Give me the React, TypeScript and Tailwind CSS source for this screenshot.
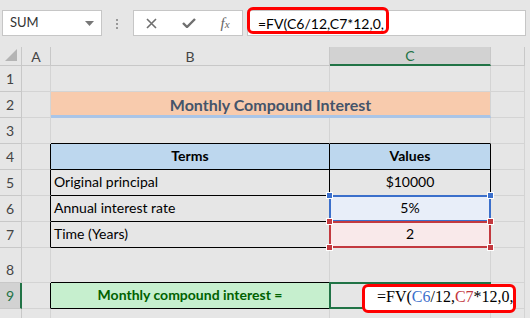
import React from 'react';

const grid = 'border-r border-b border-[#d4d4d4]';
const head = 'bg-[#e6e6e6] border-r border-b border-[#c8c8c8] text-[#444] text-[14px]';

function RowHead({ n, selected }: { n?: number; selected?: boolean }) {
    return (
        <div
            className={
                selected
                    ? 'bg-[#d2d2d2] border-b border-[#c8c8c8] border-r-2 border-r-[#217346] text-[#217346] text-[14px] flex items-end pl-[6px] pb-[2px]'
                    : `${head} flex items-end pl-[6px] pb-[2px]`
            }
        >
            {n}
        </div>
    );
}

export default function App() {
    return (
        <div className="w-[530px] h-[318px] overflow-hidden bg-[#e6e6e6] font-['Lato',sans-serif] text-black">
            {/* Formula bar */}
            <div className="flex items-start h-[47px] pt-[10px]">
                <div className="ml-[2px] w-[100px] h-[26px] bg-white border border-[#c6c6c6] flex items-center justify-between pl-[7px] pr-[7px]">
                    <span className="text-[13px] text-[#333]">SUM</span>
                    <svg width="9" height="5" viewBox="0 0 9 5">
                        <path d="M0 0 L9 0 L4.5 5 Z" fill="#777" />
                    </svg>
                </div>
                <div className="ml-[14px] mt-[9px] flex flex-col gap-[2px]">
                    <div className="w-[2px] h-[2px] bg-[#999]" />
                    <div className="w-[2px] h-[2px] bg-[#999]" />
                    <div className="w-[2px] h-[2px] bg-[#999]" />
                </div>
                <div className="ml-[15px] w-[110px] h-[26px] bg-white border border-[#c6c6c6] flex items-center justify-around">
                    <svg width="11" height="11" viewBox="0 0 11 11">
                        <path d="M1 1 L10 10 M10 1 L1 10" stroke="#6f6f6f" strokeWidth="1.6" />
                    </svg>
                    <svg width="14" height="10" viewBox="0 0 14 10">
                        <path d="M1 5 L5 9 L13 1" stroke="#6f6f6f" strokeWidth="2.4" fill="none" />
                    </svg>
                    <span className="font-['Liberation_Serif',serif] italic text-[15px] text-[#666] leading-none">
                        f<span className="text-[11px]">x</span>
                    </span>
                </div>
                <div className="ml-[4px] w-[279px] h-[26px] bg-white border border-[#c6c6c6] relative flex items-center pl-[10px]">
                    <div className="absolute left-[-1px] top-[-4px] w-[142px] h-[27px] border-[3px] border-[#ff0000] rounded-[6px]" />
                    <span className="text-[14px] text-black">=FV(C6/12,C7*12,0,</span>
                </div>
            </div>

            {/* Sheet */}
            <div className="grid grid-cols-[22px_29px_279px_161px_34px] grid-rows-[19px_26px_26px_26px_26px_26px_26px_26px_35px_26px_26px] text-[14px]">
                {/* column headers */}
                <div className={`${head} flex items-end justify-end`}>
                    <svg width="13" height="13" viewBox="0 0 13 13" className="mb-[3px] mr-[3px]">
                        <path d="M12 0 L12 12 L0 12 Z" fill="#b4b4b4" />
                    </svg>
                </div>
                <div className={`${head} flex items-center justify-center`}>A</div>
                <div className={`${head} flex items-center justify-center`}>B</div>
                <div className="bg-[#d2d2d2] border-r border-[#c8c8c8] border-b-2 border-b-[#217346] text-[#217346] flex items-center justify-center">C</div>
                <div className={head} />

                {/* row 1 */}
                <RowHead n={1} />
                <div className={grid} />
                <div className={grid} />
                <div className={grid} />
                <div className={grid} />

                {/* row 2 */}
                <RowHead n={2} />
                <div className={grid} />
                <div className="col-span-2 bg-[#f8cbad] border-r border-[#d4d4d4] border-b-[3px] border-b-[#a9c5e8] flex items-center justify-center pt-[2px]">
                    <span className="font-bold text-[16px] text-[#44546a]">Monthly Compound Interest</span>
                </div>
                <div className={grid} />

                {/* row 3 */}
                <RowHead n={3} />
                <div className={grid} />
                <div className="border-r border-[#d4d4d4] border-b border-b-black" />
                <div className="border-r border-[#d4d4d4] border-b border-b-black" />
                <div className={grid} />

                {/* row 4 */}
                <RowHead n={4} />
                <div className="border-b border-[#d4d4d4] border-r border-r-black" />
                <div className="bg-[#bdd7ee] border-r border-b border-black flex items-end justify-center pb-[3px] font-bold">Terms</div>
                <div className="bg-[#bdd7ee] border-r border-b border-black flex items-end justify-center pb-[3px] font-bold">Values</div>
                <div className={grid} />

                {/* row 5 */}
                <RowHead n={5} />
                <div className="border-b border-[#d4d4d4] border-r border-r-black" />
                <div className="border-r border-b border-black flex items-end pl-[3px] pb-[3px]">Original principal</div>
                <div className="border-r border-b border-black flex items-end justify-center pb-[3px]">$10000</div>
                <div className={grid} />

                {/* row 6 */}
                <RowHead n={6} />
                <div className="border-b border-[#d4d4d4] border-r border-r-black" />
                <div className="border-r border-b border-black flex items-end pl-[3px] pb-[3px]">Annual interest rate</div>
                <div className="relative bg-[#e8eef9] border-r border-b border-black flex items-end justify-center pb-[3px]">
                    5%
                    <div className="absolute -inset-px border-2 border-[#3b6fcb]" />
                    <div className="absolute -left-[4px] -top-[4px] w-[7px] h-[7px] bg-[#3b6fcb] border border-white" />
                    <div className="absolute -right-[4px] -top-[4px] w-[7px] h-[7px] bg-[#3b6fcb] border border-white" />
                </div>
                <div className={grid} />

                {/* row 7 */}
                <RowHead n={7} />
                <div className="border-b border-[#d4d4d4] border-r border-r-black" />
                <div className="border-r border-b border-black flex items-end pl-[3px] pb-[3px]">Time (Years)</div>
                <div className="relative bg-[#f9e9ea] border-r border-b border-black flex items-end justify-center pb-[3px]">
                    2
                    <div className="absolute -inset-px border-2 border-[#c3393f]" />
                    <div className="absolute -left-[4px] -top-[4px] w-[7px] h-[7px] bg-[#c3393f] border border-white" />
                    <div className="absolute -right-[4px] -top-[4px] w-[7px] h-[7px] bg-[#c3393f] border border-white" />
                    <div className="absolute -left-[4px] -bottom-[4px] w-[7px] h-[7px] bg-[#c3393f] border border-white" />
                    <div className="absolute -right-[4px] -bottom-[4px] w-[7px] h-[7px] bg-[#c3393f] border border-white" />
                </div>
                <div className={grid} />

                {/* row 8 */}
                <RowHead n={8} />
                <div className={grid} />
                <div className="border-r border-[#d4d4d4] border-b border-b-black" />
                <div className={grid} />
                <div className={grid} />

                {/* row 9 */}
                <RowHead n={9} selected />
                <div className="border-b border-[#d4d4d4] border-r border-r-black" />
                <div className="bg-[#c6efce] border-r border-b border-black flex items-end justify-center pb-[3px] font-bold text-[#006100]">
                    Monthly compound interest =
                </div>
                <div className="relative z-10 border-r border-b border-[#d4d4d4] flex items-end">
                    <div className="absolute -inset-px border-2 border-[#217346]" />
                    <div className="absolute left-[32px] top-[1px] w-[154px] h-[29px] bg-white border-[3px] border-[#ff0000] rounded-[6px]" />
                    <span className="relative whitespace-nowrap pl-[47px] pb-[2px] font-['Liberation_Serif',serif] text-[16px] leading-[18px]">
                        =FV(<span className="text-[#3b6fcb]">C6</span>/12,<span className="text-[#c3393f]">C7</span>*12,0,
                    </span>
                </div>
                <div className={grid} />

                {/* row 10, only its top edge shows */}
                <RowHead />
                <div className={grid} />
                <div className={grid} />
                <div className={grid} />
                <div className={grid} />
            </div>
        </div>
    );
}
